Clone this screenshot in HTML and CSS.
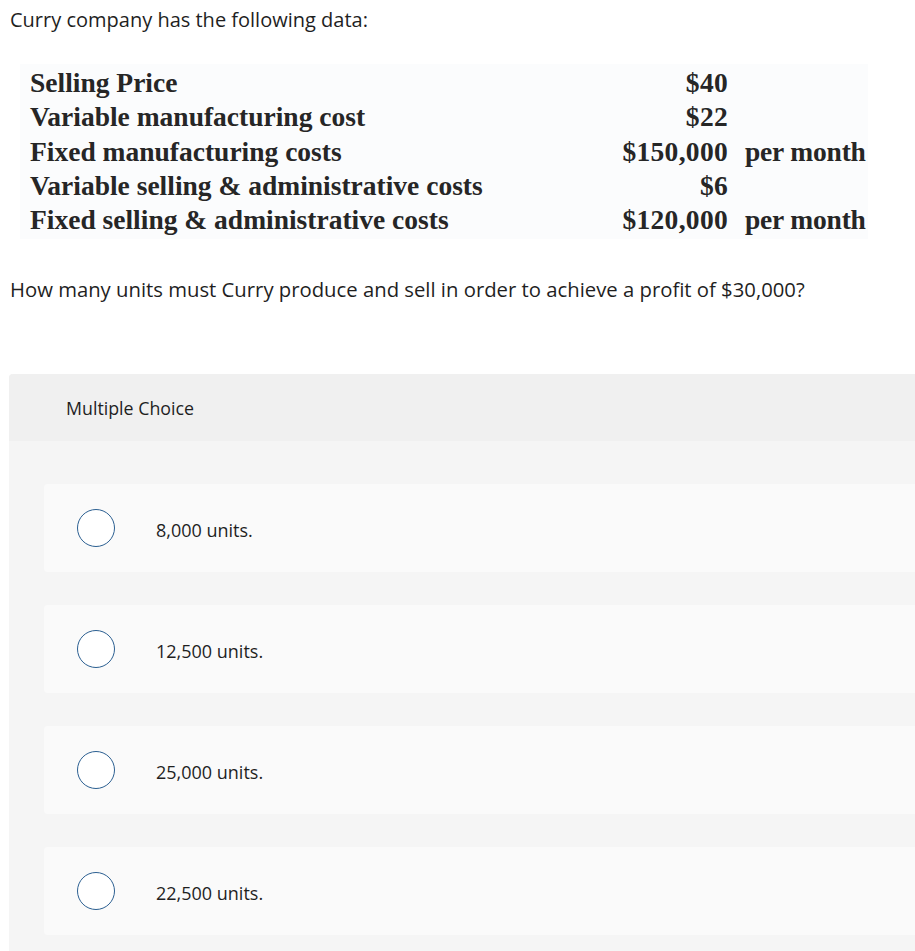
FILE: index.html
```html
<!DOCTYPE html>
<html lang="en">
<head>
<meta charset="utf-8">
<title>Multiple Choice</title>
<link rel="stylesheet" href="styles.css">
</head>
<body>
<p class="intro">Curry company has the following data:</p>
<div class="data">
  <div class="data-label">Selling Price</div><div class="data-amount">$40</div><div class="data-unit"></div>
  <div class="data-label">Variable manufacturing cost</div><div class="data-amount">$22</div><div class="data-unit"></div>
  <div class="data-label">Fixed manufacturing costs</div><div class="data-amount">$150,000</div><div class="data-unit">per month</div>
  <div class="data-label">Variable selling &amp; administrative costs</div><div class="data-amount">$6</div><div class="data-unit"></div>
  <div class="data-label">Fixed selling &amp; administrative costs</div><div class="data-amount">$120,000</div><div class="data-unit">per month</div>
</div>
<p class="question">How many units must Curry produce and sell in order to achieve a profit of $30,000?</p>
<section class="mc">
  <div class="mc-header">Multiple Choice</div>
  <div class="mc-body">
    <label class="option"><span class="radio"></span><span class="option-text">8,000 units.</span></label>
    <label class="option"><span class="radio"></span><span class="option-text">12,500 units.</span></label>
    <label class="option"><span class="radio"></span><span class="option-text">25,000 units.</span></label>
    <label class="option"><span class="radio"></span><span class="option-text">22,500 units.</span></label>
  </div>
</section>
</body>
</html>
```
FILE: styles.css
```css
* { box-sizing: border-box; }
html, body { margin: 0; padding: 0; background: #ffffff; }
body {
  font-family: "Open Sans", Lato, Arial, sans-serif;
  color: #1f1f1f;
  width: 915px;
  overflow: hidden;
}
.intro {
  margin: 0;
  padding: 8px 0 0 10px;
  font-size: 20px;
  line-height: 24px;
}
.data {
  margin: 32px 0 0 20px;
  width: 848px;
  background: #fbfcfd;
  display: grid;
  grid-template-columns: 590px 108px 150px;
  padding: 2px 0 2px 10px;
  font-family: "Liberation Serif", "Times New Roman", serif;
  font-weight: bold;
  font-size: 27.5px;
  line-height: 34.3px;
  color: #262626;
}
.data-amount { text-align: right; letter-spacing: 0.3px; }
.data-unit { padding-left: 17px; white-space: nowrap; letter-spacing: -0.2px; }
.question {
  margin: 38px 0 0 0;
  padding-left: 10px;
  font-size: 20.3px;
  line-height: 24px;
}
.mc {
  margin: 73px 0 0 9px;
  background: #f5f5f5;
  border-top-left-radius: 4px;
  overflow: hidden;
  height: 600px;
}
.mc-header {
  background: #f0f0f0;
  height: 67px;
  padding-left: 57px;
  display: flex;
  align-items: center;
  font-size: 17.8px;
}
.mc-body {
  padding: 43px 0 0 35px;
  display: flex;
  flex-direction: column;
  gap: 33px;
}
.option {
  background: #fafafa;
  height: 88px;
  border-radius: 4px 0 0 4px;
  display: flex;
  align-items: center;
  padding-left: 33px;
}
.radio {
  width: 38px;
  height: 38px;
  border-radius: 50%;
  border: 1.5px solid #2b5f91;
  background: #ffffff;
  flex: none;
}
.option-text {
  margin-left: 41px;
  padding-top: 3px;
  font-size: 18px;
}
```
